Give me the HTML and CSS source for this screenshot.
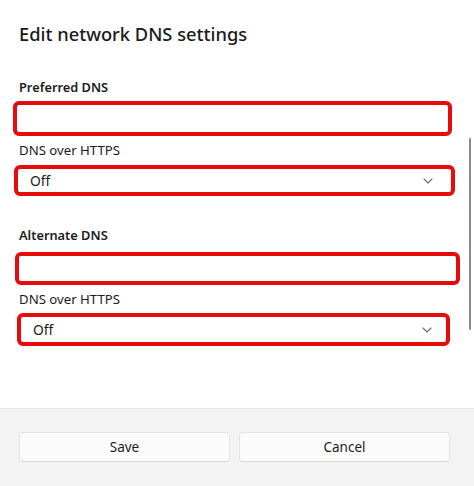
FILE: index.html
```html
<!DOCTYPE html>
<html lang="en">
<head>
<meta charset="utf-8">
<title>Edit network DNS settings</title>
<link rel="stylesheet" href="styles.css">
</head>
<body>
<div class="dialog">
  <div class="content">
    <h1 class="title">Edit network DNS settings</h1>

    <div class="label label-strong gap-title">Preferred DNS</div>
    <div class="field f1"></div>

    <div class="label gap-small">DNS over HTTPS</div>
    <div class="field select f2">
      <span class="value">Off</span>
      <svg class="chev" width="10" height="6" viewBox="0 0 10 6"><path d="M1 1 L5 5 L9 1" fill="none" stroke="#6b6b6b" stroke-width="1.1" stroke-linecap="round" stroke-linejoin="round"/></svg>
    </div>

    <div class="label label-strong gap-section">Alternate DNS</div>
    <div class="field f3"></div>

    <div class="label gap-small">DNS over HTTPS</div>
    <div class="field select f4">
      <span class="value">Off</span>
      <svg class="chev" width="10" height="6" viewBox="0 0 10 6"><path d="M1 1 L5 5 L9 1" fill="none" stroke="#6b6b6b" stroke-width="1.1" stroke-linecap="round" stroke-linejoin="round"/></svg>
    </div>

    <div class="scrollbar"></div>
  </div>
  <div class="footer">
    <button class="btn">Save</button>
    <button class="btn">Cancel</button>
  </div>
</div>
</body>
</html>
```

FILE: styles.css
```css
* { box-sizing: border-box; }
html, body { margin: 0; padding: 0; background: #ffffff; }
body {
  font-family: "Noto Sans", "Open Sans", sans-serif;
  color: #1b1b1b;
}
.dialog {
  width: 474px;
  height: 486px;
  display: flex;
  flex-direction: column;
  background: #ffffff;
}
.content {
  position: relative;
  flex: 1;
  display: flex;
  flex-direction: column;
  padding: 20px 0 0 0;
}
.title {
  margin: 0 0 0 19px;
  font-size: 18.3px;
  line-height: 28px;
  font-weight: 500;
  color: #1a1a1a;
}
.label {
  margin-left: 19px;
  font-size: 13.2px;
  line-height: 20px;
  color: #1b1b1b;
}
.label-strong { font-weight: 600; font-size: 12.8px; }
.gap-title { margin-top: 29px; }
.gap-small { margin-top: 4px; }
.gap-section { margin-top: 29px; }

.field {
  border: 4px solid #e60c0c;
  border-radius: 6px;
  background: #ffffff;
  display: flex;
  align-items: center;
  justify-content: space-between;
  padding: 0 14px 0 12px;
}
.f1 { margin: 4px 0 0 13px; width: 439px; height: 35px; }
.f2 { margin: 5px 0 0 14px; width: 441px; height: 31px; }
.f3 { margin: 7px 0 0 15px; width: 445px; height: 33px; }
.f4 { margin: 4px 0 0 17px; width: 433px; height: 33px; }
.value {
  font-size: 13.8px;
  color: #1b1b1b;
}
.f2 .chev { margin-right: 4px; }
.scrollbar {
  position: absolute;
  left: 469px;
  top: 138px;
  width: 2px;
  height: 192px;
  background: #8a8a8a;
  border-radius: 1px;
}
.footer {
  height: 78px;
  background: #f3f3f3;
  border-top: 1px solid #e8e8e8;
  display: grid;
  grid-template-columns: 211px 211px;
  column-gap: 9px;
  padding: 23px 0 0 19px;
  align-content: start;
}
.btn {
  height: 30px;
  background: #fbfbfb;
  border: 1px solid #e3e3e3;
  border-bottom-color: #d6d6d6;
  border-radius: 4px;
  font-family: "Noto Sans", "Open Sans", sans-serif;
  font-size: 13.5px;
  color: #1b1b1b;
  padding: 0;
}
```
